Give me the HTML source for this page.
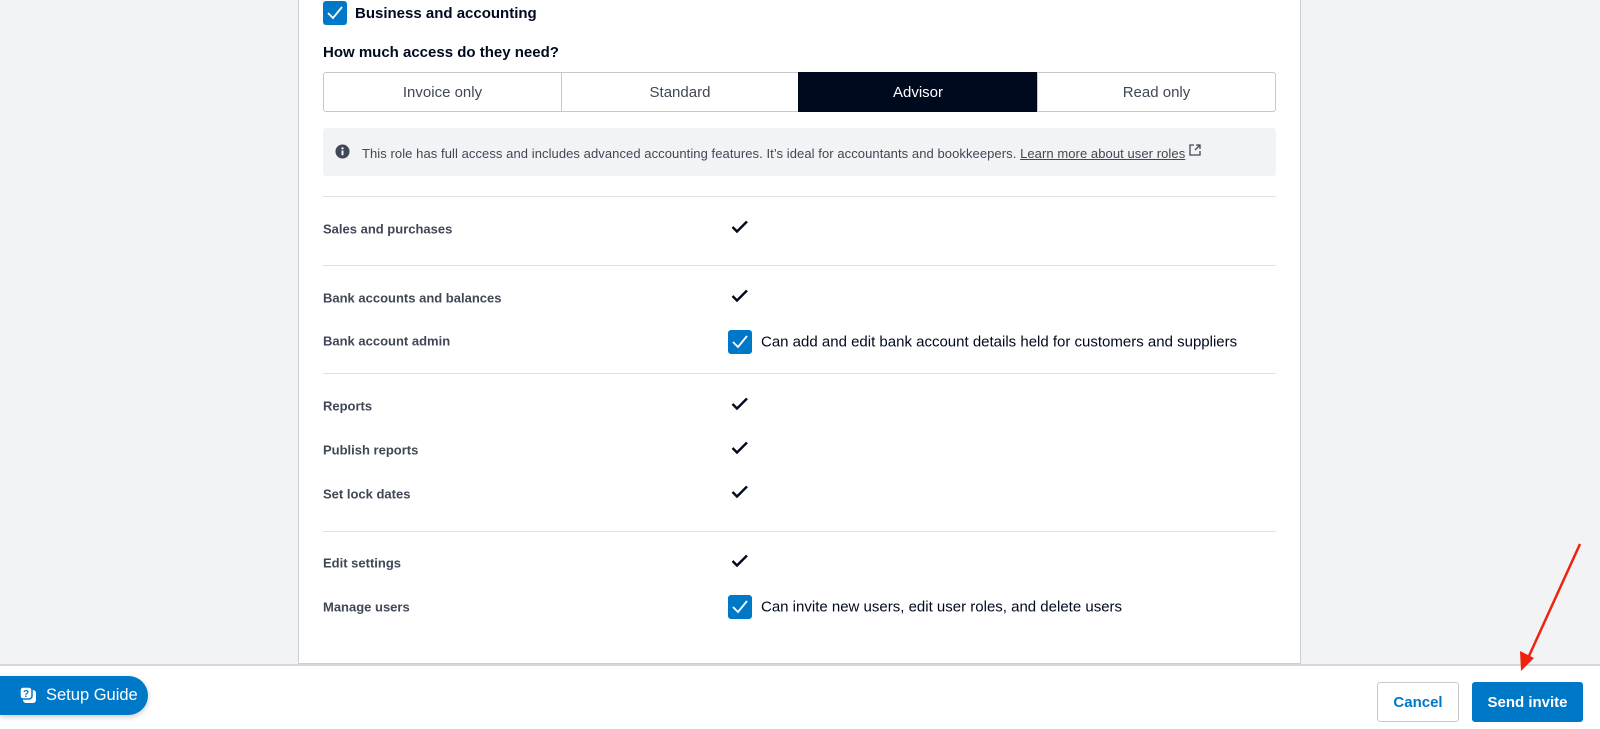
<!DOCTYPE html>
<html><head><meta charset="utf-8"><style>
*{box-sizing:border-box;margin:0;padding:0}
body{width:1600px;height:729px;overflow:hidden;background:#f2f3f5;font-family:"Liberation Sans",Arial,sans-serif;position:relative;color:#000a1e}
.panel{position:absolute;left:298px;top:-2px;width:1003px;height:666px;background:#fff;border:1px solid #ccced2;border-top:none}
.abs{position:absolute}
.cb{position:absolute;width:24px;height:24px;background:#0078c8;border-radius:3px}
.cb svg{position:absolute;left:3px;top:4px}
.seg{position:absolute;top:72px;height:40px;border:1px solid #c5c8cd;font-size:15px;color:#404756;display:flex;align-items:center;justify-content:center}
.info{position:absolute;left:323px;top:128px;width:953px;height:48px;background:#f2f3f5;border-radius:3px;font-size:13px;color:#404756}
.hr{position:absolute;left:323px;width:953px;height:1px;background:#dfe1e4}
.lbl{position:absolute;left:323px;font-size:13px;font-weight:bold;color:#404756;transform:translateY(-50%)}
.ck{position:absolute;left:731px;transform:translateY(-50%)}
.desc{position:absolute;left:761px;font-size:15px;color:#000a1e;transform:translateY(-50%)}
.footer{position:absolute;left:0;top:664px;width:1600px;height:65px;background:#fff;border-top:2px solid #d6d8db}
</style></head><body>
<div class="panel"></div>
<div class="cb" style="left:323px;top:1px"><svg width="18" height="16" viewBox="0 0 18 16"><path d="M2 8l5 5 9-11" stroke="#fff" stroke-width="1.8" fill="none"/></svg></div>
<div class="abs" style="left:355px;top:5px;font-size:15px;font-weight:bold">Business and accounting</div>
<div class="abs" style="left:323px;top:44px;font-size:15px;font-weight:bold">How much access do they need?</div>
<div class="seg" style="left:323px;width:239px;border-radius:3px 0 0 3px">Invoice only</div>
<div class="seg" style="left:561px;width:238px">Standard</div>
<div class="seg" style="left:798px;width:240px;background:#000a1e;border-color:#000a1e;color:#fff">Advisor</div>
<div class="seg" style="left:1037px;width:239px;border-radius:0 3px 3px 0">Read only</div>
<div class="info">
<svg class="abs" style="left:12px;top:16px" width="15" height="15" viewBox="0 0 16 16"><circle cx="8" cy="8" r="7.5" fill="#404756"/><rect x="7" y="7" width="2" height="5" fill="#fff"/><circle cx="8" cy="4.6" r="1.2" fill="#fff"/></svg>
<div class="abs" style="left:39px;top:16px;white-space:nowrap;letter-spacing:0.07px">This role has full access and includes advanced accounting features. It’s ideal for accountants and bookkeepers. <span style="text-decoration:underline">Learn more about user roles</span> <svg width="12" height="12" viewBox="0 0 12 12" style="vertical-align:2px"><path d="M5 1H1v10h10V7M7 1h4v4M11 1L6 6" stroke="#404756" stroke-width="1.3" fill="none"/></svg></div>
</div>
<div class="hr" style="top:196px"></div>
<div class="hr" style="top:265px"></div>
<div class="hr" style="top:373px"></div>
<div class="hr" style="top:531px"></div>
<div class="lbl" style="top:229px">Sales and purchases</div>
<div class="lbl" style="top:298px">Bank accounts and balances</div>
<div class="lbl" style="top:341px">Bank account admin</div>
<div class="lbl" style="top:406px">Reports</div>
<div class="lbl" style="top:450px">Publish reports</div>
<div class="lbl" style="top:494px">Set lock dates</div>
<div class="lbl" style="top:563px">Edit settings</div>
<div class="lbl" style="top:607px">Manage users</div>
<svg class="ck" style="top:227px" width="18" height="15" viewBox="0 0 18 15"><path d="M1.5 7.5l4.5 4.5 10-10" stroke="#000a1e" stroke-width="2.4" fill="none"/></svg>
<svg class="ck" style="top:296px" width="18" height="15" viewBox="0 0 18 15"><path d="M1.5 7.5l4.5 4.5 10-10" stroke="#000a1e" stroke-width="2.4" fill="none"/></svg>
<svg class="ck" style="top:404px" width="18" height="15" viewBox="0 0 18 15"><path d="M1.5 7.5l4.5 4.5 10-10" stroke="#000a1e" stroke-width="2.4" fill="none"/></svg>
<svg class="ck" style="top:448px" width="18" height="15" viewBox="0 0 18 15"><path d="M1.5 7.5l4.5 4.5 10-10" stroke="#000a1e" stroke-width="2.4" fill="none"/></svg>
<svg class="ck" style="top:492px" width="18" height="15" viewBox="0 0 18 15"><path d="M1.5 7.5l4.5 4.5 10-10" stroke="#000a1e" stroke-width="2.4" fill="none"/></svg>
<svg class="ck" style="top:561px" width="18" height="15" viewBox="0 0 18 15"><path d="M1.5 7.5l4.5 4.5 10-10" stroke="#000a1e" stroke-width="2.4" fill="none"/></svg>
<div class="cb" style="left:728px;top:330px"><svg width="18" height="16" viewBox="0 0 18 16"><path d="M2 8l5 5 9-11" stroke="#fff" stroke-width="1.8" fill="none"/></svg></div>
<div class="desc" style="top:342px">Can add and edit bank account details held for customers and suppliers</div>
<div class="cb" style="left:728px;top:595px"><svg width="18" height="16" viewBox="0 0 18 16"><path d="M2 8l5 5 9-11" stroke="#fff" stroke-width="1.8" fill="none"/></svg></div>
<div class="desc" style="top:607px">Can invite new users, edit user roles, and delete users</div>
<div class="footer"></div>
<div class="abs" style="left:0;top:676px;width:148px;height:39px;background:#0078c8;border-radius:0 20px 20px 0;color:#fff;font-size:16.5px;box-shadow:0 2px 6px rgba(0,0,0,.2)">
<svg class="abs" style="left:19px;top:10px" width="18" height="18" viewBox="0 0 18 18"><rect x="4" y="4" width="13" height="13" rx="3" fill="#fff"/><rect x="1" y="1" width="12" height="12" rx="3" fill="#fff" stroke="#0078c8" stroke-width="1.5"/><text x="7" y="11" font-size="10" font-weight="bold" fill="#0078c8" text-anchor="middle" font-family="Liberation Sans">?</text></svg>
<div class="abs" style="left:46px;top:10px">Setup Guide</div></div>
<div class="abs" style="left:1377px;top:682px;width:82px;height:40px;border:1px solid #c5c8cd;border-radius:3px;color:#0078c8;font-size:15px;font-weight:bold;display:flex;align-items:center;justify-content:center">Cancel</div>
<div class="abs" style="left:1472px;top:682px;width:111px;height:40px;background:#0078c8;border-radius:3px;color:#fff;font-size:15px;font-weight:bold;display:flex;align-items:center;justify-content:center">Send invite</div>
<svg class="abs" style="left:0;top:0" width="1600" height="729"><line x1="1580" y1="544" x2="1529" y2="656" stroke="#f0220f" stroke-width="2.5"/><path d="M1521 671l-1-20 14 7z" fill="#f0220f"/></svg>
</body></html>
